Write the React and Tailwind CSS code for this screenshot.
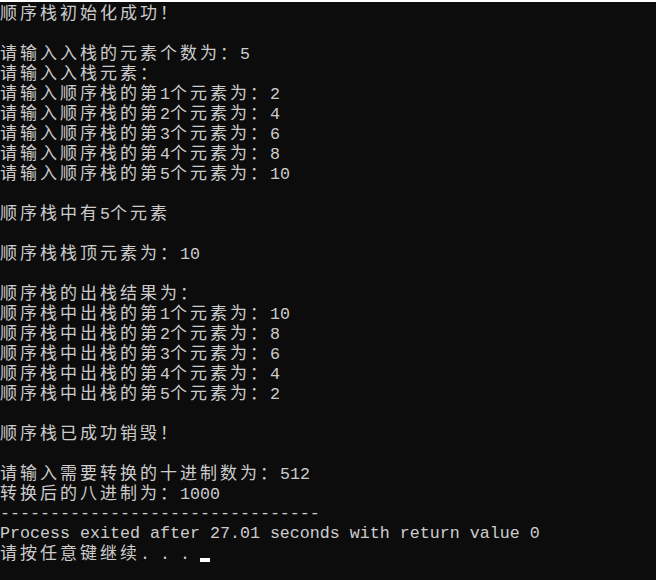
import React from 'react';

const lines = [
  '顺序栈初始化成功！',
  '',
  '请输入入栈的元素个数为：5',
  '请输入入栈元素：',
  '请输入顺序栈的第1个元素为：2',
  '请输入顺序栈的第2个元素为：4',
  '请输入顺序栈的第3个元素为：6',
  '请输入顺序栈的第4个元素为：8',
  '请输入顺序栈的第5个元素为：10',
  '',
  '顺序栈中有5个元素',
  '',
  '顺序栈栈顶元素为：10',
  '',
  '顺序栈的出栈结果为：',
  '顺序栈中出栈的第1个元素为：10',
  '顺序栈中出栈的第2个元素为：8',
  '顺序栈中出栈的第3个元素为：6',
  '顺序栈中出栈的第4个元素为：4',
  '顺序栈中出栈的第5个元素为：2',
  '',
  '顺序栈已成功销毁！',
  '',
  '请输入需要转换的十进制数为：512',
  '转换后的八进制为：1000',
  '--------------------------------',
  'Process exited after 27.01 seconds with return value 0',
];

// split a line into runs of wide (2 cells) and narrow (1 cell) chars
const runs = (text) => {
  const out = [];
  for (const ch of Array.from(text)) {
    const wide = ch.charCodeAt(0) > 0xff;
    const last = out[out.length - 1];
    if (last && last.wide === wide) last.s += ch;
    else out.push({ wide, s: ch });
  }
  return out;
};

const Line = ({ text, children }) => (
  <div className="h-[20px] leading-[20px] whitespace-pre">
    {runs(text).map((r, i) =>
      r.wide ? (
        <span
          key={i}
          className="inline-block h-[20px] leading-[20px] text-[17px] tracking-[3px] [font-family:'Noto_Sans_CJK_SC',sans-serif]"
        >
          {r.s}
        </span>
      ) : (
        <span
          key={i}
          className="inline-block h-[20px] leading-[20px] text-[16.67px] [font-family:'Liberation_Mono',monospace]"
        >
          {r.s}
        </span>
      )
    )}
    {children}
  </div>
);

export default function App() {
  return (
    <div className="w-[656px] h-[580px] bg-[#0c0c0c] text-[#cccccc] overflow-hidden border-t-2 border-white">
      {lines.map((l, i) => (
        <Line key={i} text={l} />
      ))}
      <Line text="请按任意键继续. . . ">
        <span className="inline-block w-[10px] h-[4px] bg-white align-[-3px]" />
      </Line>
    </div>
  );
}
